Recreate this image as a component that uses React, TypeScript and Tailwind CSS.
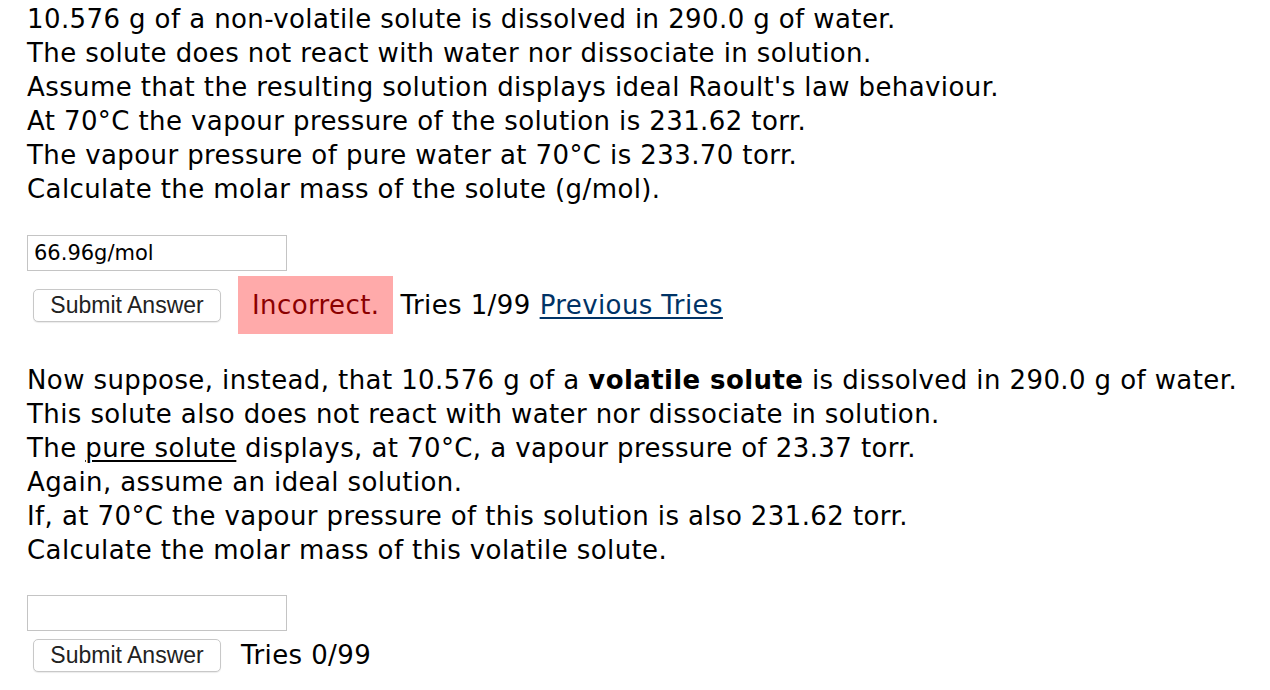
export default function App() {
  return (
    <div className="min-h-screen bg-white pl-[27px] pt-[2px] text-[26px] leading-[34px] tracking-[0.4px] text-black font-['DejaVu_Sans',Verdana,sans-serif]">
      <p>
        10.576 g of a non-volatile solute is dissolved in 290.0 g of water.
        <br />
        The solute does not react with water nor dissociate in solution.
        <br />
        Assume that the resulting solution displays ideal Raoult's law behaviour.
        <br />
        At 70°C the vapour pressure of the solution is 231.62 torr.
        <br />
        The vapour pressure of pure water at 70°C is 233.70 torr.
        <br />
        Calculate the molar mass of the solute (g/mol).
      </p>

      <input
        type="text"
        defaultValue="66.96g/mol"
        className="mt-[29px] block h-[36px] w-[260px] border border-[#c4c4c4] px-[6px] text-[21px] tracking-normal text-black font-['DejaVu_Sans',sans-serif] outline-none"
      />

      <div className="mt-[5px] flex items-center">
        <button className="ml-[6px] h-[33px] w-[188px] rounded-[5px] border border-[#c8c8c8] bg-white text-[23px] leading-none tracking-normal text-[#222] shadow-[0_1px_1px_rgba(0,0,0,0.08)] font-['Liberation_Sans',Arial,sans-serif]">
          Submit Answer
        </button>
        <span className="ml-[17px] bg-[#ffaaaa] px-[14px] py-[12px] text-[#8b0000]">Incorrect.</span>
        <span className="ml-[7px]">Tries 1/99</span>
        <a href="#" className="ml-[9px] text-[#003366] underline decoration-2 underline-offset-[3px]">
          Previous Tries
        </a>
      </div>

      <p className="mt-[29px]">
        Now suppose, instead, that 10.576 g of a <b>volatile solute</b> is dissolved in 290.0 g of water.
        <br />
        This solute also does not react with water nor dissociate in solution.
        <br />
        The <span className="underline decoration-2 underline-offset-[3px]">pure solute</span> displays, at 70°C, a vapour pressure of 23.37 torr.
        <br />
        Again, assume an ideal solution.
        <br />
        If, at 70°C the vapour pressure of this solution is also 231.62 torr.
        <br />
        Calculate the molar mass of this volatile solute.
      </p>

      <input
        type="text"
        className="mt-[28px] block h-[36px] w-[260px] border border-[#c4c4c4] px-[6px] text-[21px] tracking-normal text-black font-['DejaVu_Sans',sans-serif] outline-none"
      />

      <div className="mt-[7px] flex items-center">
        <button className="ml-[6px] h-[33px] w-[188px] rounded-[5px] border border-[#c8c8c8] bg-white text-[23px] leading-none tracking-normal text-[#222] shadow-[0_1px_1px_rgba(0,0,0,0.08)] font-['Liberation_Sans',Arial,sans-serif]">
          Submit Answer
        </button>
        <span className="ml-[20px]">Tries 0/99</span>
      </div>
    </div>
  );
}
